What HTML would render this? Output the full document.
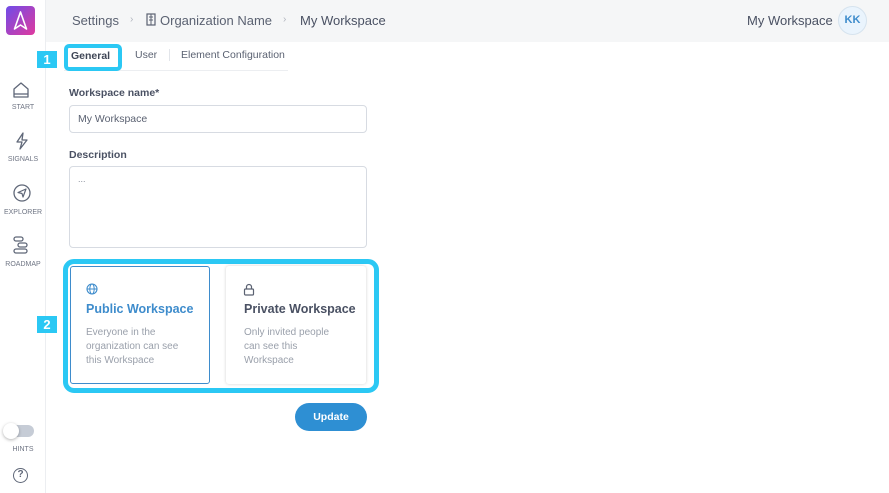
<!DOCTYPE html>
<html><head><meta charset="utf-8"><style>
*{box-sizing:border-box;margin:0;padding:0}
body{width:889px;height:493px;overflow:hidden;background:#fff;font-family:"Liberation Sans",sans-serif;position:relative;color:#4a5163}
.abs{position:absolute}
.side{left:0;top:0;width:46px;height:493px;background:#fff;border-right:1px solid #eceef1}
.hdr{left:46px;top:0;width:843px;height:42px;background:#f5f6f7}
.nav{font-size:7px;color:#6f7584;width:46px;text-align:center;left:0}
.lbl{font-size:11px;font-weight:bold;color:#4a5163}
.inp{border:1px solid #d7dbe2;border-radius:4px;background:#fff}
.card{width:140px;height:118px;background:#fff;border-radius:3px}
</style></head><body>
<div class="abs side"></div>
<div class="abs hdr"></div>
<div class="abs" style="left:6px;top:6px;width:29px;height:29px;border-radius:4px;background:linear-gradient(135deg,#6f4ce8,#e03a9e)">
<svg width="29" height="29" viewBox="0 0 29 29"><path d="M14.5 6 L8.5 23 L14.5 19 L20.5 23 Z" fill="none" stroke="#fff" stroke-width="1.6" stroke-linejoin="round"/></svg></div>
<div class="abs" style="left:72px;top:13px;font-size:13px;color:#5b6272">Settings</div>
<div class="abs" style="left:130px;top:14px;font-size:10px;color:#b0b5bf">›</div>
<svg class="abs" style="left:146px;top:13px" width="10" height="13" viewBox="0 0 10 13"><rect x="1" y="1" width="8" height="11" fill="none" stroke="#5b6272" stroke-width="1.2"/><path d="M5 1V12M3 4h4M3 7h4" stroke="#5b6272" stroke-width="1"/></svg>
<div class="abs" style="left:160px;top:13px;font-size:13px;color:#5b6272">Organization Name</div>
<div class="abs" style="left:283px;top:14px;font-size:10px;color:#b0b5bf">›</div>
<div class="abs" style="left:300px;top:13px;font-size:13px;color:#4a5163">My Workspace</div>
<div class="abs" style="left:747px;top:13px;font-size:13px;color:#4a5163">My Workspace</div>
<div class="abs" style="left:838px;top:6px;width:29px;height:29px;border-radius:50%;background:#eaf4fd;border:1px solid #d6e3ee;color:#3e8ccc;font-size:11px;font-weight:bold;text-align:center;line-height:27px">KK</div>

<svg class="abs" style="left:11px;top:80px" width="20" height="20" viewBox="0 0 20 20"><path d="M3 9 L10 3 L17 9 V17 H3 Z" fill="none" stroke="#5f6778" stroke-width="1.3" stroke-linejoin="round"/><path d="M3 14 H17" stroke="#5f6778" stroke-width="1.3"/></svg>
<div class="abs nav" style="top:104px">START</div>
<svg class="abs" style="left:12px;top:131px" width="20" height="20" viewBox="0 0 20 20"><path d="M11 2 L5 11 H10 L8 18 L15 9 H10 Z" fill="none" stroke="#5f6778" stroke-width="1.3" stroke-linejoin="round"/></svg>
<div class="abs nav" style="top:156px">SIGNALS</div>
<svg class="abs" style="left:12px;top:183px" width="20" height="20" viewBox="0 0 20 20"><circle cx="10" cy="10" r="8" fill="none" stroke="#5f6778" stroke-width="1.3"/><path d="M14 6 L6 9.5 L10 10.5 L11 14 Z" fill="none" stroke="#5f6778" stroke-width="1.2" stroke-linejoin="round"/></svg>
<div class="abs nav" style="top:209px">EXPLORER</div>
<svg class="abs" style="left:11px;top:235px" width="20" height="20" viewBox="0 0 20 20"><rect x="3" y="2" width="9" height="4" rx="2" fill="none" stroke="#5f6778" stroke-width="1.3"/><rect x="7" y="8" width="9" height="4" rx="2" fill="none" stroke="#5f6778" stroke-width="1.3"/><rect x="3" y="14" width="13" height="4" rx="2" fill="none" stroke="#5f6778" stroke-width="1.3"/></svg>
<div class="abs nav" style="top:261px">ROADMAP</div>
<div class="abs" style="left:5px;top:425px;width:29px;height:12px;border-radius:6px;background:#c6ccd6"></div>
<div class="abs" style="left:3px;top:423px;width:16px;height:16px;border-radius:50%;background:#fff;box-shadow:0 1px 3px rgba(0,0,0,.3)"></div>
<div class="abs nav" style="top:446px">HINTS</div>
<div class="abs" style="left:13px;top:468px;width:15px;height:15px;border-radius:50%;border:1.5px solid #5f6778;font-size:10px;font-weight:bold;text-align:center;line-height:12px;color:#5f6778">?</div>

<div class="abs" style="left:64px;top:70px;width:224px;height:1px;background:#eceef1"></div>
<div class="abs" style="left:37px;top:51px;width:20px;height:17px;background:#2bc8f4;color:#fff;font-weight:bold;font-size:13px;text-align:center;line-height:17px">1</div>
<div class="abs" style="left:64px;top:44px;width:58px;height:27px;border:4px solid #2bc8f4;border-radius:5px"></div>
<div class="abs" style="left:71px;top:50px;font-size:10.5px;font-weight:bold;color:#3f4656">General</div>
<div class="abs" style="left:135px;top:49px;font-size:10.5px;color:#5b6272">User</div>
<div class="abs" style="left:169px;top:49px;width:1px;height:12px;background:#e2e5ea"></div>
<div class="abs" style="left:181px;top:49px;font-size:10.5px;color:#5b6272">Element Configuration</div>

<div class="abs lbl" style="left:69px;top:87px;font-size:10.5px">Workspace name*</div>
<div class="abs inp" style="left:69px;top:105px;width:298px;height:28px"></div>
<div class="abs" style="left:78px;top:113px;font-size:10.5px;color:#5b6272">My Workspace</div>
<div class="abs lbl" style="left:69px;top:149px;font-size:10.5px">Description</div>
<div class="abs inp" style="left:69px;top:166px;width:298px;height:82px"></div>
<div class="abs" style="left:78px;top:174px;font-size:9px;color:#8a909c">...</div>

<div class="abs" style="left:37px;top:316px;width:20px;height:17px;background:#2bc8f4;color:#fff;font-weight:bold;font-size:13px;text-align:center;line-height:17px">2</div>
<div class="abs" style="left:63px;top:259px;width:316px;height:134px;border:5px solid #2bc8f4;border-radius:11px"></div>
<div class="abs card" style="left:70px;top:266px;border:1.5px solid #3e8ccc"></div>
<div class="abs card" style="left:226px;top:266px;box-shadow:0 0 3px rgba(0,0,0,.18)"></div>
<svg class="abs" style="left:86px;top:283px" width="12" height="12" viewBox="0 0 12 12"><circle cx="6" cy="6" r="5" fill="none" stroke="#3e8ccc" stroke-width="1.1"/><ellipse cx="6" cy="6" rx="2.2" ry="5" fill="none" stroke="#3e8ccc" stroke-width="1"/><path d="M1 6h10" stroke="#3e8ccc" stroke-width="1"/></svg>
<div class="abs" style="left:86px;top:302px;font-size:12.5px;font-weight:600;color:#3e8ccc">Public Workspace</div>
<div class="abs" style="left:86px;top:326px;font-size:10px;line-height:14px;color:#9aa0ab;width:102px">Everyone in the organization can see this Workspace</div>
<svg class="abs" style="left:243px;top:283px" width="12" height="13" viewBox="0 0 12 13"><rect x="1.5" y="6" width="9" height="6" rx="1" fill="none" stroke="#5b6272" stroke-width="1.2"/><path d="M3.5 6V4a2.5 2.5 0 0 1 5 0V6" fill="none" stroke="#5b6272" stroke-width="1.2"/></svg>
<div class="abs" style="left:244px;top:302px;font-size:12.5px;font-weight:600;color:#4a5163">Private Workspace</div>
<div class="abs" style="left:244px;top:326px;font-size:10px;line-height:14px;color:#9aa0ab;width:95px">Only invited people can see this Workspace</div>

<div class="abs" style="left:295px;top:403px;width:72px;height:28px;border-radius:14px;background:#2e8fd3;color:#fff;font-size:10.5px;font-weight:bold;text-align:center;line-height:28px">Update</div>
</body></html>
